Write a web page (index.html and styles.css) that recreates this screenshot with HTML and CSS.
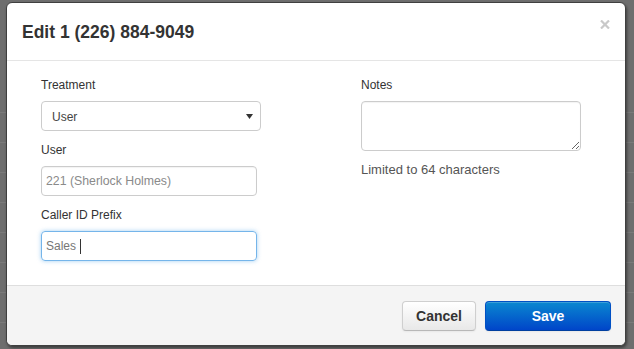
FILE: index.html
```html
<!DOCTYPE html>
<html>
<head>
<meta charset="utf-8">
<link rel="stylesheet" href="styles.css">
</head>
<body>
<div class="page">
  <div class="bg-rows">
    <div class="bg-row r1"></div>
    <div class="bg-row"></div>
    <div class="bg-row"></div>
    <div class="bg-row"></div>
    <div class="bg-row"></div>
    <div class="bg-row"></div>
    <div class="bg-row"></div>
    <div class="bg-row"></div>
  </div>
  <div class="modal">
    <div class="modal-header">
      <h3 class="modal-title">Edit 1 (226) 884-9049</h3>
      <button class="close" type="button">
        <svg width="10" height="9" viewBox="0 0 10 9"><path d="M1 0.5L9 8.5M9 0.5L1 8.5" stroke="#c9c9c9" stroke-width="2.2" fill="none"/></svg>
      </button>
    </div>
    <div class="modal-body">
      <div class="col">
        <label class="lbl">Treatment</label>
        <div class="select"><span>User</span><svg width="7" height="5" viewBox="0 0 7 5"><path d="M0 0H7L3.5 5Z" fill="#333"/></svg></div>
        <label class="lbl">User</label>
        <input class="field" type="text" placeholder="221 (Sherlock Holmes)">
        <label class="lbl">Caller ID Prefix</label>
        <div class="field focused">Sales<span class="caret"></span></div>
      </div>
      <div class="col">
        <label class="lbl">Notes</label>
        <textarea class="notes"></textarea>
        <p class="help">Limited to 64 characters</p>
      </div>
    </div>
    <div class="modal-footer">
      <button class="btn" type="button">Cancel</button>
      <button class="btn btn-primary" type="button">Save</button>
    </div>
  </div>
</div>
</body>
</html>
```
FILE: styles.css
```css
html, body {
  margin: 0;
  padding: 0;
}
body {
  width: 634px;
  height: 349px;
  overflow: hidden;
  background: #6e6e6e;
  font-family: "Liberation Sans", Arial, sans-serif;
  color: #333;
}
.page {
  position: relative;
  width: 634px;
  height: 349px;
}
.bg-rows {
  padding-top: 83px;
}
.bg-row {
  height: 29px;
  border-bottom: 1px solid #7a7a7a;
}
.modal {
  position: absolute;
  left: 6px;
  top: 2px;
  width: 620px;
  height: 344px;
  box-sizing: border-box;
  background: #fff;
  border: 1px solid #3f3f3f;
  border-radius: 6px;
  box-shadow: 1px 2px 3px rgba(0,0,0,0.45);
  display: flex;
  flex-direction: column;
  overflow: hidden;
}
.modal-header {
  height: 57px;
  flex: none;
  border-bottom: 1px solid #e5e5e5;
  padding: 0 15px;
  display: flex;
  align-items: center;
  justify-content: space-between;
}
.modal-title {
  margin: 0;
  font-size: 17.5px;
  line-height: 20px;
  font-weight: bold;
  color: #333;
}
.close {
  border: 0;
  background: none;
  padding: 0;
  margin: -14px 0 0 0;
  width: 10px;
  height: 9px;
  display: block;
}
.close svg {
  display: block;
}
.modal-body {
  height: 224px;
  flex: none;
  box-sizing: border-box;
  padding: 16px 0 0 34px;
  display: grid;
  grid-template-columns: 320px 1fr;
}
.col {
  display: flex;
  flex-direction: column;
  align-items: flex-start;
}
.lbl {
  display: block;
  font-size: 12px;
  line-height: 17px;
  color: #333;
  margin-bottom: 7px;
}
.select {
  width: 220px;
  height: 30px;
  box-sizing: border-box;
  border: 1px solid #ccc;
  border-radius: 4px;
  padding: 0 7px 0 10px;
  display: flex;
  align-items: center;
  justify-content: space-between;
  font-size: 12px;
  color: #444;
  margin-bottom: 11px;
}
.select span {
  padding-top: 1px;
}
.select svg {
  display: block;
  margin-top: 1px;
}
.field {
  width: 216px;
  height: 30px;
  box-sizing: border-box;
  border: 1px solid #ccc;
  border-radius: 4px;
  padding: 0 4px;
  font-family: "Liberation Sans", Arial, sans-serif;
  font-size: 12.3px;
  color: #555;
  margin: 0 0 11px 0;
  box-shadow: inset 0 1px 1px rgba(0,0,0,0.05);
  outline: none;
}
.field::placeholder {
  color: #8a8a8a;
}
.focused {
  display: flex;
  align-items: center;
  font-size: 12px;
  border-color: #75b5ea;
  box-shadow: 0 0 4px rgba(102,175,233,0.6);
  color: #777;
  margin-bottom: 0;
}
.caret {
  display: inline-block;
  width: 1px;
  height: 15px;
  background: #333;
  margin-left: 4px;
}
.notes {
  width: 220px;
  height: 50px;
  box-sizing: border-box;
  border: 1px solid #ccc;
  border-radius: 4px;
  margin: 0;
  padding: 4px 6px;
  font-family: "Liberation Sans", Arial, sans-serif;
  font-size: 12px;
  resize: vertical;
  box-shadow: inset 0 1px 1px rgba(0,0,0,0.05);
}
.help {
  margin: 10px 0 0 0;
  font-size: 13px;
  line-height: 17px;
  color: #555;
}
.modal-footer {
  flex: 1;
  background: #f4f4f4;
  border-top: 1px solid #dedede;
  padding: 15px 14px 0 0;
  display: flex;
  justify-content: flex-end;
  align-items: flex-start;
  gap: 9px;
}
.btn {
  height: 30px;
  box-sizing: border-box;
  border-radius: 4px;
  font-family: "Liberation Sans", Arial, sans-serif;
  font-size: 14px;
  font-weight: bold;
  padding: 0 13px;
  color: #333;
  background: linear-gradient(to bottom, #ffffff, #e8e8e8);
  border: 1px solid #cfcfcf;
  border-bottom-color: #b8b8b8;
  box-shadow: inset 0 1px 0 rgba(255,255,255,0.2), 0 1px 2px rgba(0,0,0,0.05);
}
.btn-primary {
  width: 126px;
  color: #fff;
  background: linear-gradient(to bottom, #0a88d0, #0045c9);
  border: 1px solid #0050c4;
  border-bottom-color: #003fa0;
}
```
